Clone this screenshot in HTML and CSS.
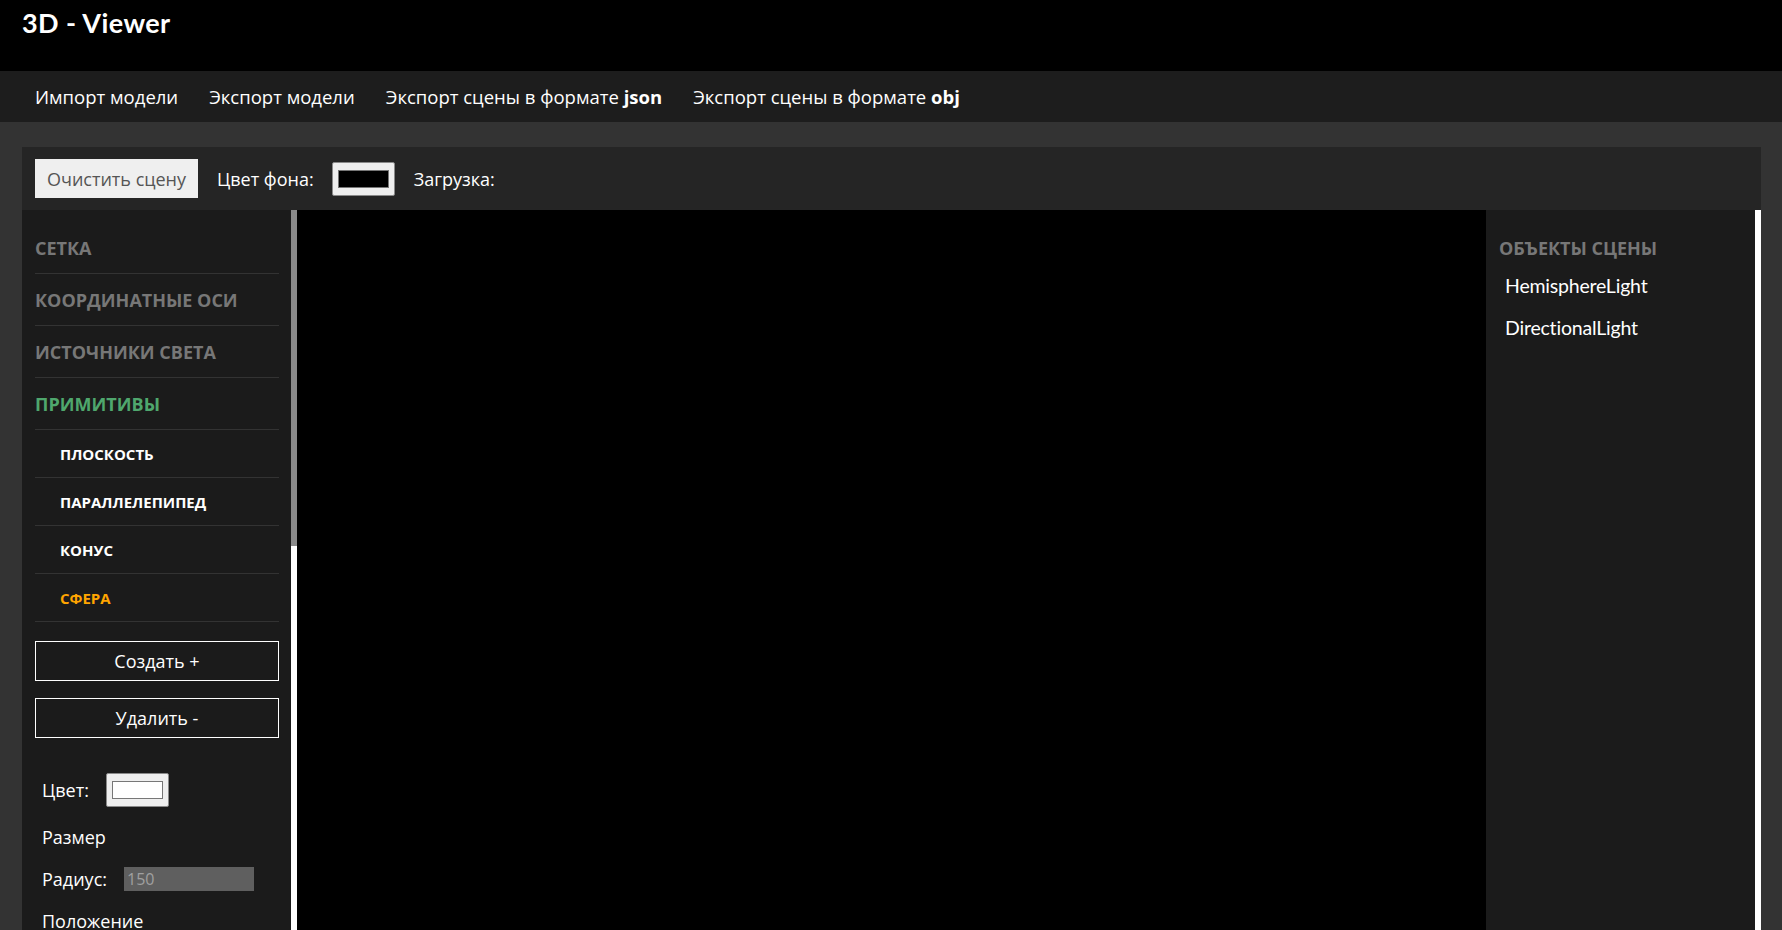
FILE: index.html
```html
<!DOCTYPE html>
<html lang="ru">
<head>
<meta charset="utf-8">
<title>3D - Viewer</title>
<link rel="stylesheet" href="styles.css">
</head>
<body>
<header class="topbar">
  <h1 class="logo">3D - Viewer</h1>
</header>
<nav class="menu">
  <a class="menu-item">Импорт модели</a>
  <a class="menu-item">Экспорт модели</a>
  <a class="menu-item">Экспорт сцены в формате <b>json</b></a>
  <a class="menu-item">Экспорт сцены в формате <b>obj</b></a>
</nav>
<main class="workspace">
  <div class="toolbar">
    <button class="btn-clear">Очистить сцену</button>
    <span class="tool-label">Цвет фона:</span>
    <span class="swatch"><span class="swatch-fill swatch-black"></span></span>
    <span class="tool-label">Загрузка:</span>
  </div>
  <div class="stage">
    <aside class="sidebar">
      <div class="group">Сетка</div>
      <div class="group">Координатные оси</div>
      <div class="group">Источники света</div>
      <div class="group group-active">Примитивы</div>
      <div class="sub">Плоскость</div>
      <div class="sub">Параллелепипед</div>
      <div class="sub">Конус</div>
      <div class="sub sub-selected">Сфера</div>
      <button class="btn-outline btn-create">Создать +</button>
      <button class="btn-outline btn-delete">Удалить -</button>
      <div class="form">
        <div class="form-row row-color">
          <span class="form-label">Цвет:</span>
          <span class="swatch"><span class="swatch-fill swatch-white"></span></span>
        </div>
        <div class="form-row">Размер</div>
        <div class="form-row">
          <span class="form-label">Радиус:</span>
          <span class="num-input">150</span>
        </div>
        <div class="form-row">Положение</div>
      </div>
    </aside>
    <div class="scrollbar"><div class="thumb"></div></div>
    <div class="viewport"></div>
    <aside class="objects">
      <div class="objects-title">Объекты сцены</div>
      <ul class="objects-list">
        <li>HemisphereLight</li>
        <li>DirectionalLight</li>
      </ul>
    </aside>
    <div class="scrollbar"></div>
  </div>
</main>
</body>
</html>
```
FILE: styles.css
```css
html, body {
  margin: 0;
  padding: 0;
}
body {
  background: #333333;
  color: #ffffff;
  font-family: "Open Sans", "Noto Sans", sans-serif;
  overflow: hidden;
}
.topbar {
  background: #000000;
  height: 71px;
  padding-left: 22px;
  box-sizing: border-box;
}
.logo {
  margin: 0;
  padding-top: 6px;
  font-family: "Lato", "Open Sans", sans-serif;
  font-weight: 700;
  font-size: 27px;
  letter-spacing: 0.4px;
  line-height: normal;
  color: #ffffff;
}
.menu {
  background: #1d1d1d;
  height: 51px;
  display: flex;
  align-items: center;
  gap: 31px;
  padding-left: 35px;
}
.menu-item {
  font-size: 18.5px;
  color: #ffffff;
  cursor: pointer;
}
.menu-item b {
  font-weight: 700;
}
.workspace {
  margin: 25px 21px 0 22px;
}
.toolbar {
  height: 63px;
  background: #252525;
  display: flex;
  align-items: center;
  padding-left: 13px;
}
.btn-clear {
  width: 163px;
  height: 39px;
  background: #efefef;
  color: #555555;
  border: none;
  font-family: "Open Sans", "Noto Sans", sans-serif;
  font-size: 18px;
  padding: 0;
  margin-right: 19px;
}
.tool-label {
  font-size: 18px;
  margin-right: 18px;
}
.swatch {
  width: 63px;
  height: 34px;
  box-sizing: border-box;
  background: #efefef;
  border: 1px solid #8a8a8a;
  border-radius: 2px;
  padding: 7px 5px;
  display: inline-flex;
  margin-right: 19px;
}
.swatch-fill {
  flex: 1;
  border: 1px solid #777777;
}
.swatch-black { background: #000000; }
.swatch-white { background: #ffffff; }
.stage {
  display: flex;
  height: 760px;
}
.sidebar {
  width: 269px;
  flex: none;
  box-sizing: border-box;
  background: #1b1b1b;
  padding: 12px 12px 0 13px;
  overflow: hidden;
}
.group {
  height: 52px;
  box-sizing: border-box;
  border-bottom: 1px solid #333333;
  display: flex;
  align-items: center;
  font-size: 18px;
  font-weight: 700;
  text-transform: uppercase;
  color: #777777;
}
.group-active {
  color: #4fa76d;
}
.sub {
  height: 48px;
  box-sizing: border-box;
  border-bottom: 1px solid #333333;
  display: flex;
  align-items: center;
  padding-left: 25px;
  font-size: 15px;
  font-weight: 700;
  text-transform: uppercase;
  color: #ffffff;
}
.sub-selected {
  color: #ffa500;
}
.btn-outline {
  display: block;
  width: 100%;
  height: 40px;
  background: transparent;
  border: 1px solid #ffffff;
  color: #ffffff;
  font-family: "Open Sans", "Noto Sans", sans-serif;
  font-size: 18px;
  padding: 0;
}
.btn-create { margin-top: 19px; }
.btn-delete { margin-top: 17px; }
.form {
  padding-left: 7px;
  margin-top: 35px;
  display: flex;
  flex-direction: column;
  gap: 18px;
  font-size: 18px;
}
.form-row {
  display: flex;
  align-items: center;
  line-height: 24px;
  min-height: 24px;
}
.row-color {
  height: 34px;
}
.form-label {
  margin-right: 17px;
}
.num-input {
  width: 130px;
  height: 24px;
  box-sizing: border-box;
  background: #5f5f5f;
  color: #a0a0a0;
  font-size: 16px;
  line-height: 24px;
  padding-left: 3px;
}
.scrollbar {
  width: 6px;
  flex: none;
  background: #ffffff;
}
.thumb {
  height: 336px;
  background: #8a8a8a;
}
.viewport {
  flex: 1;
  background: #000000;
}
.objects {
  width: 269px;
  flex: none;
  box-sizing: border-box;
  background: #1b1b1b;
  padding: 26px 13px 0 13px;
}
.objects-title {
  font-size: 18px;
  font-weight: 700;
  line-height: 24px;
  text-transform: uppercase;
  color: #777777;
}
.objects-list {
  list-style: none;
  margin: 5px 0 0 0;
  padding: 0 0 0 6px;
  font-family: "Lato", "Open Sans", sans-serif;
  font-size: 19.5px;
  letter-spacing: -0.2px;
  line-height: 42px;
  color: #ffffff;
}
```
